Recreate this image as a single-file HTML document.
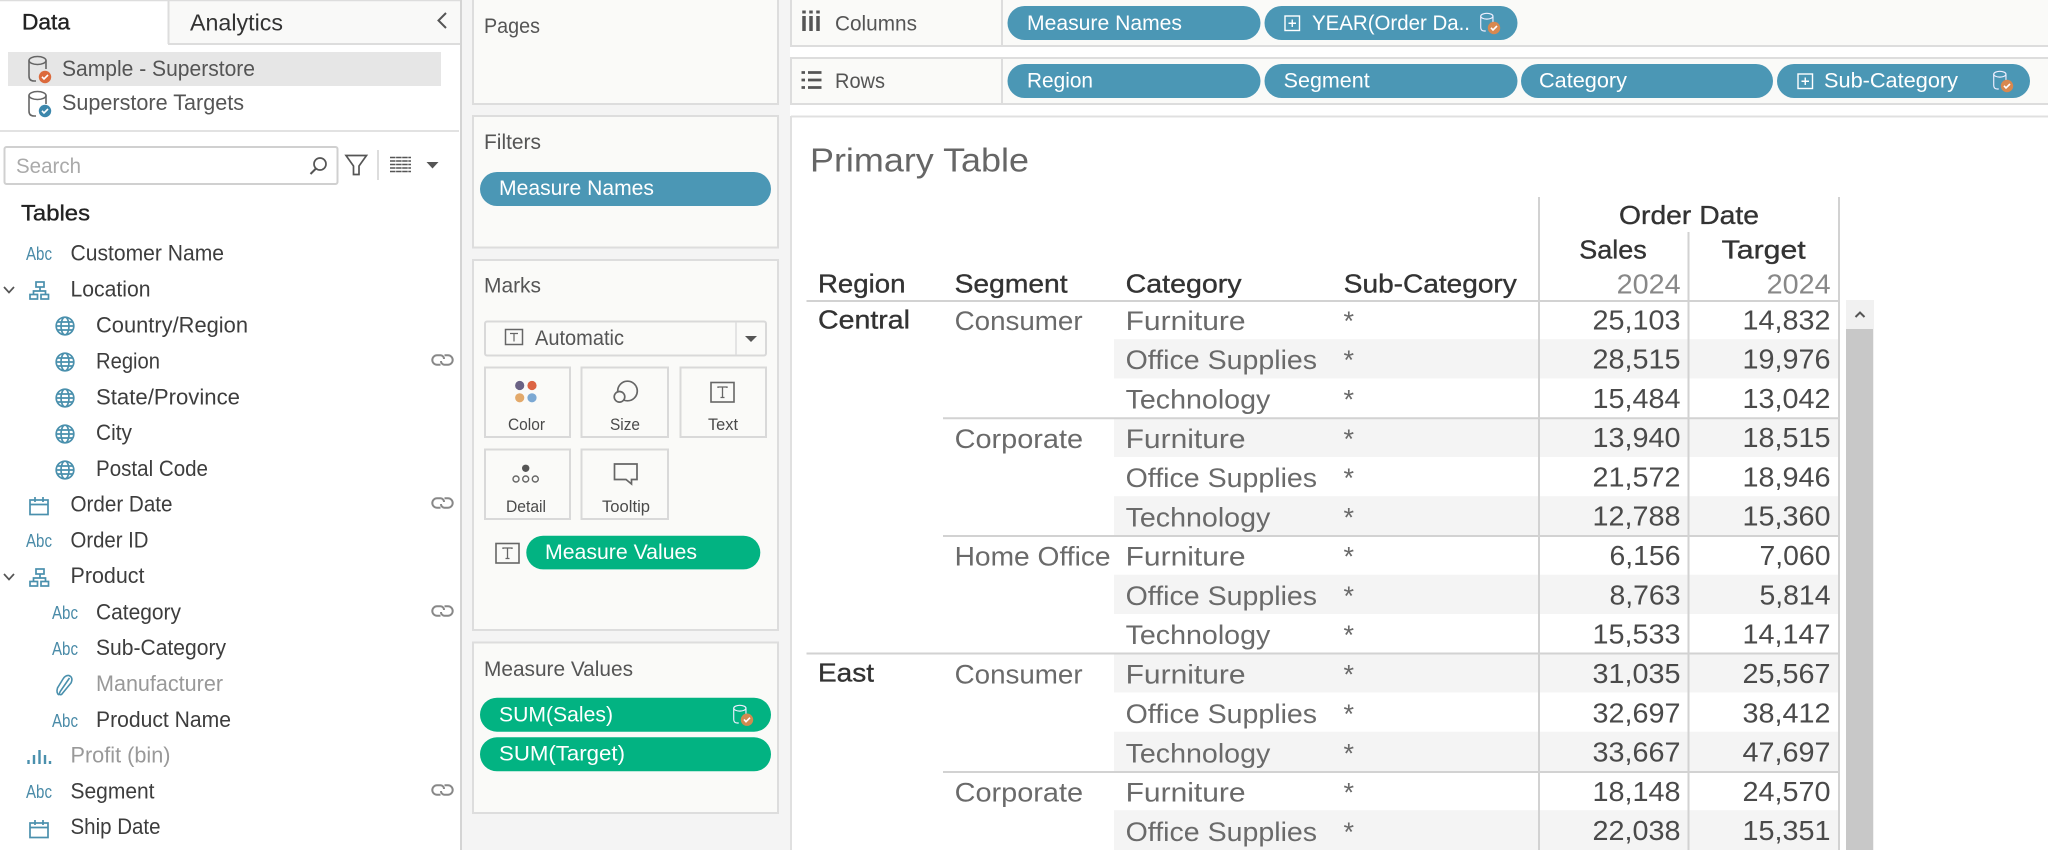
<!DOCTYPE html>
<html><head><meta charset="utf-8"><title>Primary Table</title>
<style>
html,body{margin:0;padding:0;background:#fff;width:2048px;height:850px;overflow:hidden}
svg{display:block}
text{font-family:"Liberation Sans",sans-serif}
.f{font-size:22px;fill:#3d3d3d}
.m{font-size:21px;fill:#555}
.w{font-size:21px;fill:#fff}
.s{font-size:17px;fill:#4a4a4a}
.a{font-size:18px;fill:#4a8ba8}
.h{font-size:26px;fill:#333;stroke:#333;stroke-width:.35px}
.c{font-size:27px;fill:#6a6a6a}
.n{font-size:28px;fill:#4a4a4a}
.ln{stroke:#d2d2d2;stroke-width:2;fill:none}
.card{fill:#fafaf8;stroke:#ddd;stroke-width:2}
.btn{fill:#fafaf8;stroke:#d9d9d9;stroke-width:2}
.ib{fill:none;stroke:#4a90ad;stroke-width:1.7}
.ig{fill:none;stroke:#666;stroke-width:1.6}
</style></head><body>
<svg xmlns="http://www.w3.org/2000/svg" width="2048" height="850" viewBox="0 0 2048 850">
<defs>
<g id="globe" class="ib"><circle r="8.8"/><ellipse rx="4" ry="8.8"/><path d="M-8.800 0H8.800M-7.800-4H7.800M-7.800 4H7.800"/></g>
<g id="link" fill="none" stroke="#888" stroke-width="2"><path d="M8.500 4.700H5A4.700 4.700 0 0 1 5-4.700H8.500A3.500 3.500 0 0 1 12-1"/><path d="M12.500-4.700H16A4.700 4.700 0 0 1 16 4.700H12.500A3.500 3.500 0 0 1 9 1"/></g>
<g id="hier" class="ib"><rect x="6" y="0" width="8" height="5"/><path d="M10 5V9M3.500 12V9H15.500V12"/><rect x="0" y="12.500" width="7.500" height="4.500"/><rect x="11" y="12.500" width="7.500" height="4.500"/></g>
<g id="cal" class="ib"><rect x="0" y="3" width="18" height="14.500"/><path d="M0 7.500H18M5 0V5M13 0V5"/></g>
<g id="db"><ellipse cx="9.500" cy="4.500" rx="8.500" ry="4" fill="none" stroke-width="1.600"/><path d="M1 4.500V20Q1 25 6 25H8M18 4.500V13" fill="none" stroke-width="1.600"/></g>
<path id="chk" d="M-3-.2L-1 2 3-2" fill="none" stroke="#fff" stroke-width="1.600"/>
<g id="tbox"><rect x="0" y="0" width="23" height="19.500" fill="none" stroke="#666" stroke-width="1.600"/><path d="M7 5.500V4.500H16V5.500M11.500 4.500V15M9.500 15H13.500" fill="none" stroke="#666" stroke-width="1.300"/></g>
<g id="plus" fill="none" stroke="#fff" stroke-width="1.400"><rect x="0" y="0" width="14.500" height="14.500"/><path d="M7.250 3.500V11M3.500 7.250H11"/></g>
</defs>

<rect width="2048" height="850" fill="#fff"/>
<!-- middle bg -->
<rect x="461" y="0" width="329" height="850" fill="#f4f4f4"/>
<!-- left panel -->
<rect x="168" y="1" width="292" height="43" fill="#f9f9f8"/>
<path d="M0 .5H461" stroke="#ddd" stroke-width="1.500"/>
<path d="M168.500 0V44M168 44H460" stroke="#ddd" stroke-width="2" fill="none"/>
<rect x="460" y="0" width="2" height="850" fill="#d4d4d4"/>
<text x="22" y="29.500" class="f" style="fill:#222;stroke:#222;stroke-width:.35px" textLength="48" lengthAdjust="spacingAndGlyphs">Data</text>
<text x="190" y="30.500" class="f" style="font-size:23px;fill:#333" textLength="93" lengthAdjust="spacingAndGlyphs">Analytics</text>
<path d="M446 13L438.500 20.500 446 28" fill="none" stroke="#555" stroke-width="2"/>
<rect x="8" y="52" width="433" height="34" fill="#e6e6e6"/>
<use href="#db" x="28" y="56" stroke="#666"/>
<circle cx="45" cy="77" r="6.200" fill="#dc6a3c"/><use href="#chk" x="45" y="77"/>
<text x="62" y="76" class="f" style="fill:#555" textLength="193" lengthAdjust="spacingAndGlyphs">Sample - Superstore</text>
<use href="#db" x="28" y="91" stroke="#666"/>
<circle cx="45" cy="111" r="6.200" fill="#3c87ac"/><use href="#chk" x="45" y="111"/>
<text x="62" y="110" class="f" style="fill:#555" textLength="182" lengthAdjust="spacingAndGlyphs">Superstore Targets</text>
<rect x="0" y="130" width="459" height="2" fill="#e2e2e2"/>
<rect x="4.500" y="147" width="333" height="37" rx="2" fill="#fff" stroke="#d0d0d0" stroke-width="2"/>
<text x="16" y="173" class="m" style="fill:#aaa" textLength="65" lengthAdjust="spacingAndGlyphs">Search</text>
<circle cx="320" cy="164" r="6" fill="none" stroke="#555" stroke-width="1.700"/><path d="M316 168.500L310.500 174" stroke="#555" stroke-width="2"/>
<path d="M346 155.500H366.500L359 166V174.500L353.500 174.500V166Z" fill="none" stroke="#555" stroke-width="1.700"/>
<rect x="377" y="150" width="2" height="30" fill="#ddd"/>
<path d="M390 157.500H411M390 161H411M390 164.500H411M390 168H411M390 171.500H411" stroke="#555" stroke-width="1.500" stroke-dasharray="5.500 .6" fill="none"/>
<path d="M426.500 162H438.500L432.500 168.500Z" fill="#555"/>
<text x="21" y="220.500" class="f" style="fill:#222;stroke:#222;stroke-width:.35px" textLength="69" lengthAdjust="spacingAndGlyphs">Tables</text>

<text x="26" y="260" class="a" textLength="26" lengthAdjust="spacingAndGlyphs">Abc</text>
<text x="70.500" y="260.600" class="f" textLength="153.500" lengthAdjust="spacingAndGlyphs">Customer Name</text>
<path d="M4 287L9 292.500 14 287" fill="none" stroke="#555" stroke-width="1.700"/>
<use href="#hier" x="30" y="282"/>
<text x="70.500" y="296.500" class="f" textLength="80" lengthAdjust="spacingAndGlyphs">Location</text>
<use href="#globe" x="65" y="326"/>
<text x="96" y="332.500" class="f" textLength="152" lengthAdjust="spacingAndGlyphs">Country/Region</text>
<use href="#globe" x="65" y="362"/>
<text x="96" y="368.500" class="f" textLength="64" lengthAdjust="spacingAndGlyphs">Region</text>
<use href="#link" x="432" y="360"/>
<use href="#globe" x="65" y="398"/>
<text x="96" y="404.500" class="f" textLength="144" lengthAdjust="spacingAndGlyphs">State/Province</text>
<use href="#globe" x="65" y="434"/>
<text x="96" y="440" class="f" textLength="36" lengthAdjust="spacingAndGlyphs">City</text>
<use href="#globe" x="65" y="470"/>
<text x="96" y="476" class="f" textLength="112" lengthAdjust="spacingAndGlyphs">Postal Code</text>
<use href="#cal" x="30" y="497"/>
<text x="70.500" y="511.700" class="f" textLength="102" lengthAdjust="spacingAndGlyphs">Order Date</text>
<use href="#link" x="432" y="503"/>
<text x="26" y="547" class="a" textLength="26" lengthAdjust="spacingAndGlyphs">Abc</text>
<text x="70.500" y="547.500" class="f" textLength="78" lengthAdjust="spacingAndGlyphs">Order ID</text>
<path d="M4 574L9 579.500 14 574" fill="none" stroke="#555" stroke-width="1.700"/>
<use href="#hier" x="30" y="569"/>
<text x="70.500" y="583" class="f" textLength="74" lengthAdjust="spacingAndGlyphs">Product</text>
<text x="52" y="619" class="a" textLength="26" lengthAdjust="spacingAndGlyphs">Abc</text>
<text x="96" y="619.300" class="f" textLength="85" lengthAdjust="spacingAndGlyphs">Category</text>
<use href="#link" x="432" y="611"/>
<text x="52" y="655" class="a" textLength="26" lengthAdjust="spacingAndGlyphs">Abc</text>
<text x="96" y="655" class="f" textLength="130" lengthAdjust="spacingAndGlyphs">Sub-Category</text>
<path d="M69.500 678L60.500 691Q58 695.500 61.500 694.500L71 683Q73.500 677.500 69 675.500Q65.500 675 63 679L57.500 688Q56 693 59 695" fill="none" stroke="#4a90ad" stroke-width="1.600"/>
<text x="96" y="691" class="f" style="fill:#999" textLength="127" lengthAdjust="spacingAndGlyphs">Manufacturer</text>
<text x="52" y="727" class="a" textLength="26" lengthAdjust="spacingAndGlyphs">Abc</text>
<text x="96" y="727" class="f" textLength="135" lengthAdjust="spacingAndGlyphs">Product Name</text>
<path d="M28.500 764V760M34 764V755M39.500 764V750M45 764V755M50 764V761" stroke="#4a90ad" stroke-width="2.400" fill="none"/>
<text x="70.500" y="762.700" class="f" style="fill:#999" textLength="100" lengthAdjust="spacingAndGlyphs">Profit (bin)</text>
<text x="26" y="798" class="a" textLength="26" lengthAdjust="spacingAndGlyphs">Abc</text>
<text x="70.500" y="798.500" class="f" textLength="84" lengthAdjust="spacingAndGlyphs">Segment</text>
<use href="#link" x="432" y="790"/>
<use href="#cal" x="30" y="820"/>
<text x="70.500" y="834" class="f" textLength="90" lengthAdjust="spacingAndGlyphs">Ship Date</text>

<!-- middle cards -->
<rect x="473" y="-2" width="305" height="106" class="card"/>
<text x="484" y="33" class="m" textLength="56" lengthAdjust="spacingAndGlyphs">Pages</text>
<rect x="473" y="116" width="305" height="131.500" class="card"/>
<text x="484" y="149" class="m" textLength="57" lengthAdjust="spacingAndGlyphs">Filters</text>
<rect x="480" y="172" width="291" height="34" rx="17" fill="#4b97b5"/>
<text x="499" y="195" class="w" textLength="155" lengthAdjust="spacingAndGlyphs">Measure Names</text>
<rect x="473" y="260" width="305" height="370" class="card"/>
<text x="484" y="292.500" class="m" textLength="57" lengthAdjust="spacingAndGlyphs">Marks</text>
<rect x="485" y="321.500" width="281" height="34" rx="2" class="btn"/>
<path d="M736 322V355" stroke="#ddd" stroke-width="1.500"/>
<rect x="505.500" y="329.500" width="17" height="15" fill="none" stroke="#666" stroke-width="1.500"/>
<path d="M510 333.500H518M514 333.500V341.500" stroke="#666" stroke-width="1.200" fill="none"/>
<text x="535" y="345" class="m" textLength="89" lengthAdjust="spacingAndGlyphs">Automatic</text>
<path d="M745 336H757L751 342Z" fill="#555"/>
<rect x="485" y="367.500" width="85" height="69.500" class="btn"/>
<rect x="581.500" y="367.500" width="86.500" height="69.500" class="btn"/>
<rect x="680.500" y="367.500" width="85.500" height="69.500" class="btn"/>
<rect x="485" y="449.500" width="85" height="69.500" class="btn"/>
<rect x="581.500" y="449.500" width="86.500" height="69.500" class="btn"/>
<circle cx="519.700" cy="385.500" r="4.600" fill="#6a6285"/><circle cx="532" cy="385.500" r="4.600" fill="#dc6444"/>
<circle cx="519.700" cy="397.800" r="4.600" fill="#e3a96a"/><circle cx="532" cy="397.800" r="4.600" fill="#7ba8d3"/>
<text x="508" y="430" class="s" textLength="37" lengthAdjust="spacingAndGlyphs">Color</text>
<circle cx="627.500" cy="391" r="9.800" fill="none" stroke="#666" stroke-width="1.700"/><circle cx="619.500" cy="396.800" r="5.300" fill="#fafaf8" stroke="#666" stroke-width="1.700"/>
<text x="610" y="430" class="s" textLength="30" lengthAdjust="spacingAndGlyphs">Size</text>
<use href="#tbox" x="711" y="382.500"/>
<text x="708" y="430" class="s" textLength="30" lengthAdjust="spacingAndGlyphs">Text</text>
<circle cx="525.700" cy="468.300" r="3.700" fill="#555"/>
<circle cx="516" cy="479" r="3" fill="none" stroke="#666" stroke-width="1.400"/><circle cx="525.700" cy="479" r="3" fill="none" stroke="#666" stroke-width="1.400"/><circle cx="535.300" cy="479" r="3" fill="none" stroke="#666" stroke-width="1.400"/>
<text x="506" y="512" class="s" textLength="40" lengthAdjust="spacingAndGlyphs">Detail</text>
<path d="M614.500 464H637V479.500H631.500V484L626 479.500H614.500Z" fill="none" stroke="#666" stroke-width="1.700"/>
<text x="602" y="512" class="s" textLength="48" lengthAdjust="spacingAndGlyphs">Tooltip</text>
<use href="#tbox" x="496" y="543.500"/>
<rect x="526.300" y="535.700" width="234" height="33.700" rx="16.800" fill="#02b382"/>
<text x="545" y="559" class="w" textLength="152" lengthAdjust="spacingAndGlyphs">Measure Values</text>
<rect x="473" y="642.500" width="305" height="170.500" class="card"/>
<text x="484" y="676" class="m" textLength="149" lengthAdjust="spacingAndGlyphs">Measure Values</text>
<rect x="480" y="697.700" width="291" height="34" rx="17" fill="#02b382"/>
<text x="499" y="721.700" class="w" textLength="114" lengthAdjust="spacingAndGlyphs">SUM(Sales)</text>
<g transform="translate(733,705) scale(.72)" stroke="#eef"><use href="#db"/></g>
<circle cx="747" cy="719.700" r="6.200" fill="#d08a50"/><use href="#chk" x="747" y="719.700"/>
<rect x="480" y="737.300" width="291" height="34" rx="17" fill="#02b382"/>
<text x="499" y="760.700" class="w" textLength="126" lengthAdjust="spacingAndGlyphs">SUM(Target)</text>

<!-- shelves -->
<rect x="791" y="-2" width="1260" height="48" class="card"/>
<rect x="791" y="58" width="1260" height="46" class="card"/>
<path d="M1002 0V46M1002 58V104" stroke="#ddd" stroke-width="2"/>
<path d="M804 16V31M811 16V31M818 16V31" stroke="#555" stroke-width="3.500" fill="none"/>
<path d="M804 10.500V13.500M811 10.500V13.500M818 10.500V13.500" stroke="#555" stroke-width="3.500" fill="none"/>
<text x="835" y="30.500" class="m" textLength="82" lengthAdjust="spacingAndGlyphs">Columns</text>
<path d="M801.500 72.500H805M808 72.500H821.500M801.500 80H805M808 80H821.500M801.500 87.500H805M808 87.500H821.500" stroke="#555" stroke-width="2.800" fill="none"/>
<text x="835" y="88" class="m" textLength="50" lengthAdjust="spacingAndGlyphs">Rows</text>

<rect x="1007.500" y="6" width="253" height="34" rx="17" fill="#4b97b5"/>
<text x="1027" y="30" class="w" textLength="155" lengthAdjust="spacingAndGlyphs">Measure Names</text>
<rect x="1264.500" y="6" width="253" height="34" rx="17" fill="#4b97b5"/>
<use href="#plus" x="1285" y="16"/>
<text x="1312" y="30" class="w" textLength="158" lengthAdjust="spacingAndGlyphs">YEAR(Order Da..</text>
<g transform="translate(1480,13) scale(.72)" stroke="#eef"><use href="#db"/></g>
<circle cx="1494" cy="28" r="6.200" fill="#d8884f"/><use href="#chk" x="1494" y="28"/>

<rect x="1007.500" y="64" width="253" height="34" rx="17" fill="#4b97b5"/>
<text x="1027" y="87.500" class="w" textLength="66" lengthAdjust="spacingAndGlyphs">Region</text>
<rect x="1264.500" y="64" width="253" height="34" rx="17" fill="#4b97b5"/>
<text x="1283.700" y="87.500" class="w" textLength="86" lengthAdjust="spacingAndGlyphs">Segment</text>
<rect x="1521" y="64" width="252" height="34" rx="17" fill="#4b97b5"/>
<text x="1539" y="87.500" class="w" textLength="88" lengthAdjust="spacingAndGlyphs">Category</text>
<rect x="1777" y="64" width="253" height="34" rx="17" fill="#4b97b5"/>
<use href="#plus" x="1798" y="74"/>
<text x="1824" y="87.500" class="w" textLength="134" lengthAdjust="spacingAndGlyphs">Sub-Category</text>
<g transform="translate(1993,71) scale(.72)" stroke="#eef"><use href="#db"/></g>
<circle cx="2007" cy="86" r="6.200" fill="#d8884f"/><use href="#chk" x="2007" y="86"/>

<!-- table card -->
<rect x="790" y="115" width="1258" height="735" fill="#fff"/>
<path d="M791 116.500H2048M791 116V850" stroke="#e0e0e0" stroke-width="2" fill="none"/>
<text x="810" y="171.700" style="font-size:33px;fill:#666" textLength="219" lengthAdjust="spacingAndGlyphs">Primary Table</text>

<!-- bands -->
<g fill="#f4f4f4">
<rect x="1114" y="339.250" width="724" height="39.250"/>
<rect x="1114" y="417.750" width="724" height="39.250"/>
<rect x="1114" y="496.250" width="724" height="39.250"/>
<rect x="1114" y="574.750" width="724" height="39.250"/>
<rect x="1114" y="653.250" width="724" height="39.250"/>
<rect x="1114" y="731.750" width="724" height="39.250"/>
<rect x="1114" y="810.250" width="724" height="39.750"/>
</g>
<!-- lines -->
<path class="ln" d="M806.500 301H1839M943 418.300H1838M943 536H1838M806.500 653.500H1838M943 772H1838"/>
<path class="ln" d="M1539 197V850M1688.500 232V850M1839 197V850"/>

<!-- headers -->
<text x="1619" y="224" class="h" textLength="140" lengthAdjust="spacingAndGlyphs">Order Date</text>
<text x="1579.300" y="258.300" class="h" textLength="67.500" lengthAdjust="spacingAndGlyphs">Sales</text>
<text x="1721.700" y="258.300" class="h" textLength="84" lengthAdjust="spacingAndGlyphs">Target</text>
<text x="818" y="292.700" class="h" textLength="87.500" lengthAdjust="spacingAndGlyphs">Region</text>
<text x="954.600" y="292.700" class="h" textLength="113" lengthAdjust="spacingAndGlyphs">Segment</text>
<text x="1125.600" y="292.700" class="h" textLength="116" lengthAdjust="spacingAndGlyphs">Category</text>
<text x="1343.800" y="292.700" class="h" textLength="173" lengthAdjust="spacingAndGlyphs">Sub-Category</text>
<text x="1616.700" y="293.300" class="n" style="fill:#888" textLength="64" lengthAdjust="spacingAndGlyphs">2024</text>
<text x="1766.700" y="293.300" class="n" style="fill:#888" textLength="64" lengthAdjust="spacingAndGlyphs">2024</text>

<text x="818" y="328.500" class="h" textLength="92" lengthAdjust="spacingAndGlyphs">Central</text>
<text x="818" y="681.700" class="h" textLength="56" lengthAdjust="spacingAndGlyphs">East</text>
<text x="954.600" y="330" class="c" textLength="128" lengthAdjust="spacingAndGlyphs">Consumer</text>
<text x="954.600" y="447.750" class="c" textLength="128.500" lengthAdjust="spacingAndGlyphs">Corporate</text>
<text x="954.600" y="565.500" class="c" textLength="156" lengthAdjust="spacingAndGlyphs">Home Office</text>
<text x="954.600" y="683.500" class="c" textLength="128" lengthAdjust="spacingAndGlyphs">Consumer</text>
<text x="954.600" y="801.500" class="c" textLength="128.500" lengthAdjust="spacingAndGlyphs">Corporate</text>

<!-- rows -->
<g transform="translate(0,330)"><text x="1125.600" class="c" textLength="120" lengthAdjust="spacingAndGlyphs">Furniture</text><text x="1343.500" class="c">*</text><text x="1592.500" y="-.7" class="n" textLength="88" lengthAdjust="spacingAndGlyphs">25,103</text><text x="1742.500" y="-.7" class="n" textLength="88" lengthAdjust="spacingAndGlyphs">14,832</text></g>
<g transform="translate(0,369)"><text x="1125.600" class="c" textLength="191.500" lengthAdjust="spacingAndGlyphs">Office Supplies</text><text x="1343.500" class="c">*</text><text x="1592.500" y="-.7" class="n" textLength="88" lengthAdjust="spacingAndGlyphs">28,515</text><text x="1742.500" y="-.7" class="n" textLength="88" lengthAdjust="spacingAndGlyphs">19,976</text></g>
<g transform="translate(0,408.500)"><text x="1125.600" class="c" textLength="144.700" lengthAdjust="spacingAndGlyphs">Technology</text><text x="1343.500" class="c">*</text><text x="1592.500" y="-.7" class="n" textLength="88" lengthAdjust="spacingAndGlyphs">15,484</text><text x="1742.500" y="-.7" class="n" textLength="88" lengthAdjust="spacingAndGlyphs">13,042</text></g>
<g transform="translate(0,447.750)"><text x="1125.600" class="c" textLength="120" lengthAdjust="spacingAndGlyphs">Furniture</text><text x="1343.500" class="c">*</text><text x="1592.500" y="-.7" class="n" textLength="88" lengthAdjust="spacingAndGlyphs">13,940</text><text x="1742.500" y="-.7" class="n" textLength="88" lengthAdjust="spacingAndGlyphs">18,515</text></g>
<g transform="translate(0,487)"><text x="1125.600" class="c" textLength="191.500" lengthAdjust="spacingAndGlyphs">Office Supplies</text><text x="1343.500" class="c">*</text><text x="1592.500" y="-.7" class="n" textLength="88" lengthAdjust="spacingAndGlyphs">21,572</text><text x="1742.500" y="-.7" class="n" textLength="88" lengthAdjust="spacingAndGlyphs">18,946</text></g>
<g transform="translate(0,526.250)"><text x="1125.600" class="c" textLength="144.700" lengthAdjust="spacingAndGlyphs">Technology</text><text x="1343.500" class="c">*</text><text x="1592.500" y="-.7" class="n" textLength="88" lengthAdjust="spacingAndGlyphs">12,788</text><text x="1742.500" y="-.7" class="n" textLength="88" lengthAdjust="spacingAndGlyphs">15,360</text></g>
<g transform="translate(0,565.500)"><text x="1125.600" class="c" textLength="120" lengthAdjust="spacingAndGlyphs">Furniture</text><text x="1343.500" class="c">*</text><text x="1609.500" y="-.7" class="n" textLength="71" lengthAdjust="spacingAndGlyphs">6,156</text><text x="1759.500" y="-.7" class="n" textLength="71" lengthAdjust="spacingAndGlyphs">7,060</text></g>
<g transform="translate(0,605)"><text x="1125.600" class="c" textLength="191.500" lengthAdjust="spacingAndGlyphs">Office Supplies</text><text x="1343.500" class="c">*</text><text x="1609.500" y="-.7" class="n" textLength="71" lengthAdjust="spacingAndGlyphs">8,763</text><text x="1759.500" y="-.7" class="n" textLength="71" lengthAdjust="spacingAndGlyphs">5,814</text></g>
<g transform="translate(0,644)"><text x="1125.600" class="c" textLength="144.700" lengthAdjust="spacingAndGlyphs">Technology</text><text x="1343.500" class="c">*</text><text x="1592.500" y="-.7" class="n" textLength="88" lengthAdjust="spacingAndGlyphs">15,533</text><text x="1742.500" y="-.7" class="n" textLength="88" lengthAdjust="spacingAndGlyphs">14,147</text></g>
<g transform="translate(0,683.500)"><text x="1125.600" class="c" textLength="120" lengthAdjust="spacingAndGlyphs">Furniture</text><text x="1343.500" class="c">*</text><text x="1592.500" y="-.7" class="n" textLength="88" lengthAdjust="spacingAndGlyphs">31,035</text><text x="1742.500" y="-.7" class="n" textLength="88" lengthAdjust="spacingAndGlyphs">25,567</text></g>
<g transform="translate(0,723)"><text x="1125.600" class="c" textLength="191.500" lengthAdjust="spacingAndGlyphs">Office Supplies</text><text x="1343.500" class="c">*</text><text x="1592.500" y="-.7" class="n" textLength="88" lengthAdjust="spacingAndGlyphs">32,697</text><text x="1742.500" y="-.7" class="n" textLength="88" lengthAdjust="spacingAndGlyphs">38,412</text></g>
<g transform="translate(0,762.250)"><text x="1125.600" class="c" textLength="144.700" lengthAdjust="spacingAndGlyphs">Technology</text><text x="1343.500" class="c">*</text><text x="1592.500" y="-.7" class="n" textLength="88" lengthAdjust="spacingAndGlyphs">33,667</text><text x="1742.500" y="-.7" class="n" textLength="88" lengthAdjust="spacingAndGlyphs">47,697</text></g>
<g transform="translate(0,801.500)"><text x="1125.600" class="c" textLength="120" lengthAdjust="spacingAndGlyphs">Furniture</text><text x="1343.500" class="c">*</text><text x="1592.500" y="-.7" class="n" textLength="88" lengthAdjust="spacingAndGlyphs">18,148</text><text x="1742.500" y="-.7" class="n" textLength="88" lengthAdjust="spacingAndGlyphs">24,570</text></g>
<g transform="translate(0,840.750)"><text x="1125.600" class="c" textLength="191.500" lengthAdjust="spacingAndGlyphs">Office Supplies</text><text x="1343.500" class="c">*</text><text x="1592.500" y="-.7" class="n" textLength="88" lengthAdjust="spacingAndGlyphs">22,038</text><text x="1742.500" y="-.7" class="n" textLength="88" lengthAdjust="spacingAndGlyphs">15,351</text></g>

<!-- scrollbar -->
<rect x="1846" y="300" width="28" height="550" fill="#f1f1f1"/>
<rect x="1846" y="329" width="27" height="521" fill="#c8c8c8"/>
<path d="M1855.500 317L1860 312.500 1864.500 317" fill="none" stroke="#555" stroke-width="2"/>
</svg>
</body></html>
